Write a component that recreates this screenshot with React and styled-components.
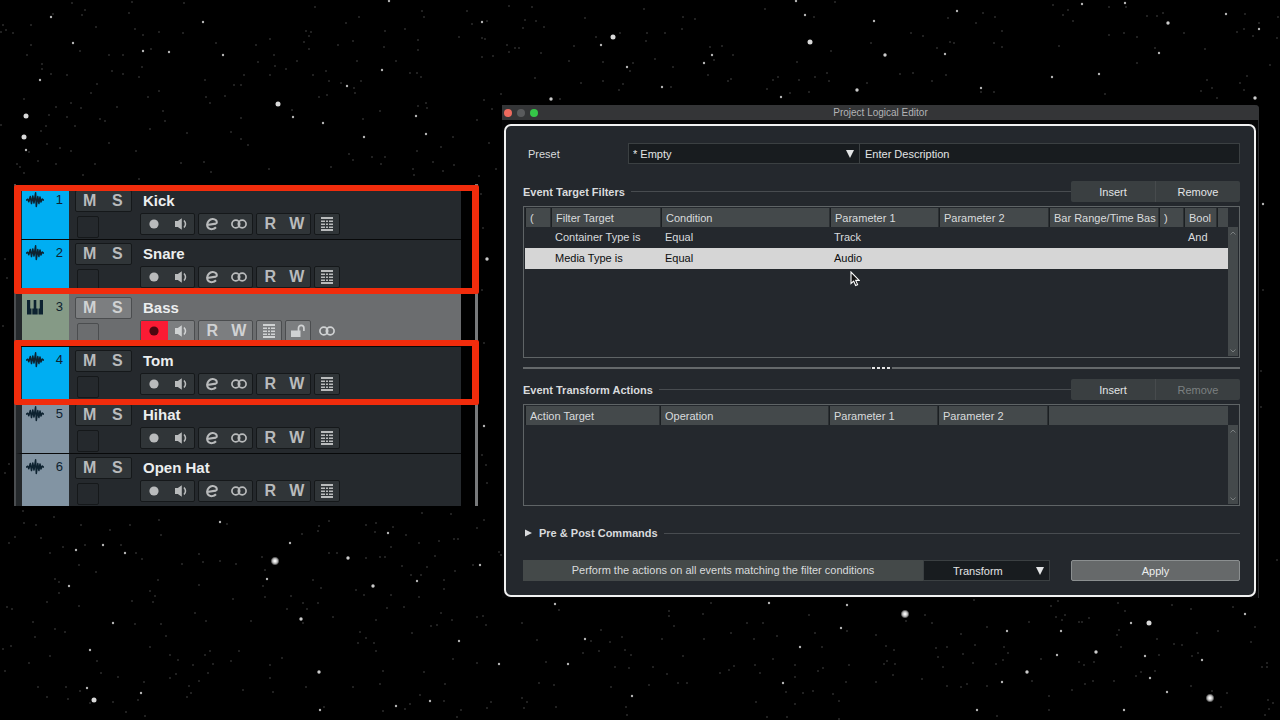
import { useState } from "react";
import styled, { createGlobalStyle, css } from "styled-components";

const GlobalStyle = createGlobalStyle`
  * {
    box-sizing: border-box;
  }

  body {
    margin: 0;
    background: #000;
  }

  button, input, select {
    margin: 0;
    padding: 0;
    border: 0;
    font: inherit;
    color: inherit;
    background: none;
  }
`;

/* star positions, grouped from faint to bright */
const STARS = [
  {
    r: 0.7,
    opacity: 0.36,
    points:
      "53,14 72,3 85,10 82,15 96,27 132,2 129,13 143,35 135,29 159,32 184,3 183,33 216,43 256,45 270,39 274,55 258,62 275,66 286,69 270,75 297,61 304,42 309,36 311,32 306,31 309,49 315,7 359,17 346,23 353,41 338,45 385,31 384,47 405,29 422,11 424,17 418,40 418,50 396,61 357,61 326,71 313,75 361,81 354,88 355,93 341,83 329,81 327,95 319,97 410,73 417,73 421,77 467,11 472,24 487,21 459,37 482,38 485,39 482,57 493,56 507,45 509,52 515,48 519,48 509,6 532,7 525,20 536,21 523,28 544,27 541,53 535,78 585,18 596,37 620,33 574,46 569,61 581,83 603,62 630,71 633,63 623,84 619,90 603,81 560,99 501,94 484,100 492,109 477,120 427,108 426,103 418,106 380,111 363,119 453,137 441,147 417,151 433,162 454,165 443,171 413,169 414,175 489,143 496,169 479,176 385,157 372,157 353,160 349,154 381,164 331,167 292,110 241,118 231,132 241,139 248,145 269,169 204,162 211,172 181,163 187,133 165,121 163,111 150,129 136,151 139,179 109,143 95,164 83,175 71,151 60,148 47,144 56,164 38,161 24,173 17,164 20,167 29,152 1,125 41,131 46,126 49,115 56,107 67,117 75,126 81,108 71,103 100,119 105,121 117,107 91,93 97,84 67,75 51,74 42,69 42,64 27,55 31,45 24,99 1,32 6,30 13,33 3,25 31,25 80,51 109,55 123,55 112,71 123,74 142,67 139,77 151,49 159,91 148,97 205,80 206,97 210,103 225,96 234,85 241,85 244,75 644,9 683,17 695,19 682,29 647,33 665,33 646,41 710,47 722,46 733,55 714,60 655,59 673,67 708,75 728,81 731,79 671,87 765,9 814,17 835,2 831,51 797,62 827,73 815,77 829,81 778,77 773,80 799,80 767,89 809,92 790,93 867,83 871,43 911,33 923,36 900,74 913,73 937,48 950,42 954,43 948,18 976,23 983,13 995,17 1002,31 994,43 1002,47 946,75 932,81 981,92 994,92 1053,5 1068,10 1063,15 1073,21 1109,7 1126,7 1147,16 1157,16 1163,13 1109,35 1124,33 1137,37 1059,46 1184,33 1155,48 1137,63 1105,94 1245,14 1259,23 1244,29 1237,32 1253,36 1277,38 1278,17 1205,49 1270,65 1247,76 1240,83 1207,80 1212,88 1201,91 1217,98 1244,90 24,523 36,525 54,517 23,511 81,525 110,530 130,525 159,520 161,535 15,537 9,543 41,538 50,553 63,547 85,545 121,545 136,553 142,559 79,565 96,572 55,579 59,582 59,593 47,602 7,607 12,609 79,606 33,622 135,624 132,601 153,602 155,596 150,591 158,580 161,624 166,636 150,647 55,629 65,632 35,637 11,646 3,649 50,656 29,663 97,661 101,673 118,677 5,671 38,687 66,687 90,703 80,691 47,697 68,699 113,702 126,712 145,716 138,700 144,682 170,655 178,660 176,674 170,678 189,686 191,693 187,697 199,681 208,673 193,665 213,664 210,651 205,655 231,661 239,651 243,690 206,621 195,613 251,621 199,585 182,564 199,554 203,562 220,561 236,564 227,524 262,557 302,534 318,531 319,526 329,521 329,553 337,553 265,570 263,586 265,597 233,599 291,596 287,609 303,603 307,609 318,603 321,588 313,580 303,623 333,617 356,590 364,595 391,595 387,608 404,607 376,620 412,633 360,632 366,638 358,643 374,643 376,651 270,665 270,678 282,658 273,692 306,687 324,707 353,687 383,671 380,684 405,709 410,704 383,711 420,695 444,701 445,684 424,672 453,659 477,663 486,625 483,616 477,617 452,620 437,625 431,626 441,613 411,575 421,575 427,567 402,566 419,597 444,589 444,580 455,571 435,556 419,543 439,541 454,539 458,539 477,528 484,520 451,514 422,513 376,523 366,525 375,532 393,527 406,535 391,547 385,557 380,557 366,558 473,565 499,552 501,555 559,610 522,623 537,640 546,662 591,641 601,630 599,651 610,642 622,637 625,650 631,655 615,667 629,668 583,653 539,683 554,685 556,707 527,702 524,708 522,698 491,702 487,708 461,710 457,717 611,687 626,707 627,715 711,603 669,611 669,616 703,614 674,626 747,623 763,623 662,639 704,639 731,633 754,639 777,636 809,615 822,647 815,633 847,631 906,621 925,615 932,623 876,635 886,646 894,650 887,661 884,664 895,664 893,675 876,682 922,679 683,656 653,667 667,674 649,685 678,683 687,683 720,673 729,670 734,666 755,665 760,673 773,659 795,665 795,677 786,692 803,693 813,691 818,671 823,668 849,665 846,682 833,694 839,701 795,704 756,702 767,717 787,717 839,719 936,648 938,657 947,647 943,667 961,634 975,645 963,654 973,663 947,686 961,687 967,684 987,686 974,600 987,627 1004,647 1008,653 1003,660 996,664 1032,681 1029,622 1041,659 1058,601 1051,606 1065,615 1062,620 1056,617 1079,622 1082,622 1089,618 1094,662 1084,665 1079,662 1093,681 1085,684 1072,690 1049,696 1049,710 997,716 1114,681 1121,647 1117,635 1119,630 1125,611 1118,603 1157,639 1159,655 1155,671 1141,672 1136,676 1174,644 1182,645 1172,605 1191,609 1197,633 1198,653 1192,656 1191,686 1212,691 1227,693 1221,707 1218,631 1233,607 1255,627 1251,642 1267,663 1262,667 1267,667 1268,700 1273,703 1269,709 1265,715 5,259 7,278 3,326 484,343 482,290 483,228 481,194 482,455 9,464 5,473 486,465 487,483 1261,371 1261,407 1263,290 1277,560",
  },
  {
    r: 1.2,
    opacity: 0.7,
    points:
      "51,17 203,22 223,55 389,1 382,70 347,86 482,22 601,45 627,67 416,116 364,137 426,134 323,123 293,117 26,150 40,80 73,43 143,51 169,52 712,55 704,63 662,87 796,1 805,15 781,97 874,21 945,54 957,11 981,88 1082,4 1125,3 1159,53 1099,74 1052,77 1226,14 1259,29 76,550 103,545 125,553 69,586 113,623 90,650 87,688 141,693 220,522 290,543 267,579 320,710 396,706 430,701 459,641 499,664 417,581 388,533 480,565 555,604 568,664 585,639 632,696 769,603 800,647 841,628 847,605 783,683 1007,631 1002,682 1057,655 1061,631 977,710 1124,710 1131,623 1145,656 1150,678 1167,692 1202,660 1245,614 484,426 1263,204",
  },
  {
    r: 1.7,
    opacity: 0.8,
    points:
      "551,99 857,90 885,55 1168,23 1255,98 348,558 301,619 373,586 319,672 1027,672 1096,652 487,259",
  },
  { r: 2.5, opacity: 0.85, points: "613,37 278,104 24,137 26,116 810,42 94,700 1149,623" },
  { r: 4.5, opacity: 1, glow: true, points: "275,561 905,614 1210,698" },
];

const TRACKS = [
  { id: 1, name: "Kick", kind: "audio", color: "#00aef2" },
  { id: 2, name: "Snare", kind: "audio", color: "#00aef2" },
  { id: 3, name: "Bass", kind: "midi", color: "#859a86", selected: true },
  { id: 4, name: "Tom", kind: "audio", color: "#00aef2" },
  { id: 5, name: "Hihat", kind: "audio", color: "#8294a3" },
  { id: 6, name: "Open Hat", kind: "audio", color: "#8294a3" },
];

const FILTER_COLUMNS = [
  { label: "(", width: 26 },
  { label: "Filter Target", width: 110 },
  { label: "Condition", width: 169 },
  { label: "Parameter 1", width: 109 },
  { label: "Parameter 2", width: 110 },
  { label: "Bar Range/Time Bas", width: 110 },
  { label: ")", width: 25 },
  { label: "Bool", width: 33 },
  { label: "" },
];

const FILTER_ROWS = [
  ["", "Container Type is", "Equal", "Track", "", "", "", "And", ""],
  ["", "Media Type is", "Equal", "Audio", "", "", "", "", ""],
];

const ACTION_COLUMNS = [
  { label: "Action Target", width: 135 },
  { label: "Operation", width: 169 },
  { label: "Parameter 1", width: 109 },
  { label: "Parameter 2", width: 110 },
  { label: "" },
];

const Starfield = () => (
  <Sky viewBox="0 0 1280 720" preserveAspectRatio="xMidYMid slice" aria-hidden="true">
    <defs>
      <radialGradient id="glow">
        <stop offset="0.2" stopColor="#f4f4f4" />
        <stop offset="0.6" stopColor="#a8a8a8" />
        <stop offset="1" stopColor="#000" />
      </radialGradient>
    </defs>
    {STARS.map(({ r, opacity, glow, points }) => (
      <g key={r} fill={glow ? "url(#glow)" : "#fff"} opacity={opacity}>
        {points.split(" ").map((point) => {
          const [x, y] = point.split(",");
          return <circle key={point} cx={x} cy={y} r={r} />;
        })}
      </g>
    ))}
  </Sky>
);

const WaveIcon = () => (
  <svg
    width="18"
    height="18"
    viewBox="0 0 18 18"
    fill="none"
    stroke="currentColor"
    strokeWidth="1.500"
    strokeLinejoin="round"
  >
    <path d="M0 9.500L1.800 8.200L2.800 10.800L4.300 5.500L5.500 12.500L6.800 5L8 12L9.600 1.800L10.300 15.500L11.800 5.500L12.900 12.500L14 6L15 11L16.200 8L18 9.500" />
  </svg>
);

const KeysIcon = () => (
  <svg width="18" height="18" viewBox="0 0 18 18" fill="currentColor">
    <path d="M1 2h3.200v8.500h1.300v6H1z M7.700 2h2.600v8.500h1.400v6H6.300v-6h1.400z M13.800 2H17v14.500h-4.500v-6h1.300z" />
  </svg>
);

const RecordIcon = () => (
  <svg width="16" height="16" viewBox="0 0 16 16" fill="currentColor">
    <circle cx="8" cy="8" r="4.600" />
  </svg>
);

const SpeakerIcon = () => (
  <svg width="16" height="16" viewBox="0 0 16 16">
    <path d="M2 5h2.800L8.800 2.200v11.600L4.800 11H2z" fill="currentColor" />
    <path d="M11 4.500q3 3.500 0 7" fill="none" stroke="currentColor" strokeWidth="1.500" />
  </svg>
);

const EditIcon = () => (
  <svg width="16" height="16" viewBox="0 0 16 16" fill="none" stroke="currentColor" strokeWidth="2.100">
    <path d="M3.200 9L11.800 7.600C13.200 7.200 13 5.400 12 4.300C10.200 2.500 6.800 2.700 4.900 4.700C2.500 7.200 2.600 10.500 4.600 12.200C6.700 13.800 10 13.200 12 11.200" />
  </svg>
);

const LinkIcon = () => (
  <svg width="16" height="16" viewBox="0 0 16 16" fill="none" stroke="currentColor" strokeWidth="1.700">
    <circle cx="4.800" cy="8" r="3.900" />
    <circle cx="11.200" cy="8" r="3.900" />
  </svg>
);

const LanesIcon = () => (
  <svg width="16" height="16" viewBox="0 0 16 16" fill="currentColor">
    <path d="M2 1h12v2H2z M2 13h12v2H2z" />
    <path d="M2 4.500h4V6H2z M7 4.500h2V6H7z M10 4.500h4V6h-4z M2 7.500h4V9H2z M7 7.500h2V9H7z M10 7.500h4V9h-4z M2 10.500h4V12H2z M7 10.500h2V12H7z M10 10.500h4V12h-4z" />
  </svg>
);

const UnlockIcon = () => (
  <svg width="16" height="16" viewBox="0 0 16 16">
    <path d="M1 7.500h9.500v6.500H1z" fill="currentColor" />
    <path d="M8.500 8V5a2.700 2.700 0 0 1 5.400 0v3" fill="none" stroke="currentColor" strokeWidth="1.700" />
  </svg>
);

const Chevron = ({ down }) => (
  <svg width="6" height="4" viewBox="0 0 6 4" fill="none" stroke="#7a7f80">
    <path d={down ? "M0.500 0.500L3 3L5.500 0.500" : "M0.500 3.500L3 1L5.500 3.500"} />
  </svg>
);

const Track = ({ track }) => {
  const { id, name, kind, color, selected } = track;

  return (
    <TrackRow $selected={selected}>
      <ColorStrip $color={color}>
        {kind === "midi" ? <KeysIcon /> : <WaveIcon />}
        <span>{id}</span>
      </ColorStrip>
      <TrackSide>
        <ButtonGroup>
          <TrackButton aria-label={`Mute ${name}`}>M</TrackButton>
          <TrackButton aria-label={`Solo ${name}`}>S</TrackButton>
        </ButtonGroup>
        <Slot />
      </TrackSide>
      <TrackMain>
        <TrackName>{name}</TrackName>
        <Controls>
          <ButtonGroup>
            <TrackButton $armed={selected} aria-label="Record"><RecordIcon /></TrackButton>
            <TrackButton aria-label="Monitor"><SpeakerIcon /></TrackButton>
          </ButtonGroup>
          {!selected && (
            <ButtonGroup>
              <TrackButton aria-label="Edit"><EditIcon /></TrackButton>
              <TrackButton aria-label="Stereo"><LinkIcon /></TrackButton>
            </ButtonGroup>
          )}
          <ButtonGroup>
            <TrackButton aria-label="Read">R</TrackButton>
            <TrackButton aria-label="Write">W</TrackButton>
          </ButtonGroup>
          <ButtonGroup $single>
            <TrackButton aria-label="Lanes"><LanesIcon /></TrackButton>
          </ButtonGroup>
          {selected && (
            <>
              <ButtonGroup $single>
                <TrackButton aria-label="Lock"><UnlockIcon /></TrackButton>
              </ButtonGroup>
              <ButtonGroup $single $plain>
                <TrackButton aria-label="Stereo"><LinkIcon /></TrackButton>
              </ButtonGroup>
            </>
          )}
        </Controls>
      </TrackMain>
    </TrackRow>
  );
};

const Grid = ({ label, columns, rows = [], selectedRow, onSelect, short, children }) => (
  <GridBox $short={short}>
    <Table aria-label={label}>
      <colgroup>
        {columns.map(({ width }, i) => (
          <Col key={i} $width={width} />
        ))}
      </colgroup>
      <thead>
        <tr>
          {columns.map((column, i) => (
            <Th key={i}><CellText>{column.label}</CellText></Th>
          ))}
        </tr>
      </thead>
      <tbody>
        {rows.map((row, i) => (
          <Tr key={i} $selected={i === selectedRow} onClick={() => onSelect(i)}>
            {row.map((cell, j) => (
              <Td key={j}>{cell}</Td>
            ))}
          </Tr>
        ))}
      </tbody>
    </Table>
    <Scrollbar>
      <button aria-label="Scroll up"><Chevron /></button>
      <button aria-label="Scroll down"><Chevron down /></button>
    </Scrollbar>
    {children}
  </GridBox>
);

const App = () => {
  const [selectedRow, setSelectedRow] = useState(1);
  const [description, setDescription] = useState("Enter Description");

  return (
    <>
      <GlobalStyle />
      <Page>
        <Starfield />
        <TrackPanel>
          <TrackList>
            {TRACKS.map((track) => (
              <Track key={track.id} track={track} />
            ))}
          </TrackList>
          <Highlight $top={1} $height={109} />
          <Highlight $top={156} $height={65} />
        </TrackPanel>

        <Window>
          <TitleBar>
            <Lights>
              <Light $color="#ed6a5e" />
              <Light $color="#5a5b5d" />
              <Light $color="#35c648" />
            </Lights>
            <h1>Project Logical Editor</h1>
          </TitleBar>
          <Editor>
            <PresetRow>
              <label htmlFor="preset">Preset</label>
              <SelectBox>
                <select id="preset">
                  <option>* Empty</option>
                </select>
                <Arrow />
              </SelectBox>
              <Description
                aria-label="Description"
                value={description}
                onChange={(event) => setDescription(event.target.value)}
              />
            </PresetRow>

            <SectionHead>
              <h2>Event Target Filters</h2>
              <Rule />
              <SectionButtons>
                <button>Insert</button>
                <button>Remove</button>
              </SectionButtons>
            </SectionHead>
            <Grid
              label="Event Target Filters"
              columns={FILTER_COLUMNS}
              rows={FILTER_ROWS}
              selectedRow={selectedRow}
              onSelect={setSelectedRow}
            >
              <Pointer viewBox="0 0 10 16">
                <path
                  d="M1 1v11.500l2.700-2.400 1.900 4.400 2-0.900-1.900-4.200h3.500z"
                  fill="#111"
                  stroke="#fff"
                  strokeWidth="1.100"
                />
              </Pointer>
            </Grid>

            <Splitter>
              <Rule $thick />
              <Grip />
              <Rule $thick />
            </Splitter>

            <SectionHead>
              <h2>Event Transform Actions</h2>
              <Rule />
              <SectionButtons>
                <button>Insert</button>
                <button disabled>Remove</button>
              </SectionButtons>
            </SectionHead>
            <Grid label="Event Transform Actions" columns={ACTION_COLUMNS} short />

            <Commands>
              <button aria-expanded="false">
                <svg width="7" height="8" viewBox="0 0 7 8" fill="currentColor">
                  <path d="M0 0.500L7 4L0 7.500z" />
                </svg>
                Pre &amp; Post Commands
              </button>
              <Rule />
            </Commands>

            <Footer>
              <FooterNote htmlFor="mode">
                Perform the actions on all events matching the filter conditions
              </FooterNote>
              <SelectBox $mode>
                <select id="mode">
                  <option>Transform</option>
                </select>
                <Arrow />
              </SelectBox>
              <ApplyButton>Apply</ApplyButton>
            </Footer>
          </Editor>
        </Window>
      </Page>
    </>
  );
};

const Page = styled.main`
  position: relative;
  min-height: 100vh;
  padding: 105px 21px 24px 14px;
  display: grid;
  grid-template-columns: minmax(0, 465fr) minmax(0, 757fr);
  gap: 23px;
  align-items: start;
  overflow: hidden;
  background: #000;
  color: #d9dbdd;
  font-family: "Liberation Sans", Arial, sans-serif;
  font-size: 11px;
`;

const Sky = styled.svg`
  position: absolute;
  inset: 0;
  width: 100%;
  height: 100%;
`;

/* track list */

const TrackPanel = styled.section`
  position: relative;
  margin-top: 79px;
`;

const TrackList = styled.ul`
  list-style: none;
  margin: 0 1px 0 0;
  padding: 2px 14px 0 0;
  background: #000;
  border-left: 2px solid #4a4d50;
  border-right: 3px solid #77797b;
`;

const TrackRow = styled.li`
  height: 53px;
  display: flex;
  overflow: hidden;
  border-left: 6px solid #24282b;
  border-top: 1px solid #08090a;
  background: ${(props) => (props.$selected ? "#6b6d6f" : "#25292d")};
  color: ${(props) => (props.$selected ? "#d0d2d3" : "#b9bbbc")};
  --group: ${(props) => (props.$selected ? "#7c7e80" : "#303538")};
  --edge: ${(props) => (props.$selected ? "#4b4d4f" : "#15181a")};

  &:nth-child(even) {
    height: 54px;
  }

  &:last-child {
    height: 53px;
  }
`;

const ColorStrip = styled.div`
  width: 47px;
  padding: 4px 6px 0 4px;
  display: flex;
  justify-content: space-between;
  align-items: flex-start;
  background: ${(props) => props.$color};
  color: #0d2230;

  span {
    font-size: 13px;
    line-height: 18px;
  }
`;

const TrackSide = styled.div`
  width: 57px;
  margin-left: 6px;
  padding-top: 3px;
`;

const TrackMain = styled.div`
  flex: 1;
  margin-left: 8px;
`;

const ButtonGroup = styled.div`
  width: ${(props) => (props.$single ? "26px" : "55px")};
  height: 22px;
  display: flex;
  overflow: hidden;
  border: 1px solid var(--edge);
  border-radius: 2px;
  background: var(--group);

  ${TrackSide} & {
    width: 57px;
  }

  ${(props) =>
    props.$plain &&
    css`
      border-color: transparent;
      background: none;
    `}
`;

const TrackButton = styled.button`
  flex: 1;
  display: flex;
  justify-content: center;
  align-items: center;
  font-size: 16px;
  font-weight: bold;
  line-height: 20px;

  ${(props) =>
    props.$armed &&
    css`
      background: #fb1b34;
      color: #4c0710;
    `}
`;

const Slot = styled.div`
  width: 22px;
  height: 22px;
  margin: 4px 0 0 2px;
  border: 1px solid var(--edge);
  border-radius: 2px;
`;

const TrackName = styled.div`
  height: 26px;
  padding: 5px 0 0 3px;
  color: #eceeef;
  font-size: 15px;
  font-weight: bold;
  line-height: 18px;
`;

const Controls = styled.div`
  display: flex;
  gap: 3px;
`;

const Highlight = styled.div`
  position: absolute;
  left: 0;
  right: 0;
  top: ${(props) => props.$top}px;
  height: ${(props) => props.$height}px;
  border: solid #f12c0c;
  border-width: 6px 7px;
  border-radius: 2px;
`;

/* editor window */

const Window = styled.section`
  position: relative;
  padding: 0 3px 1px 2px;
  background: #050506;
  border-top-right-radius: 4px;
  box-shadow: inset -1px 0 #2c2d2f;
`;

const TitleBar = styled.header`
  height: 15px;
  margin: 0 -3px 4px -2px;
  padding: 0 2px;
  display: grid;
  grid-template-columns: 1fr auto 1fr;
  align-items: center;
  border-top-right-radius: 4px;
  background: #343537;

  h1 {
    margin: 0;
    color: #b3b4b6;
    font-size: 10px;
    font-weight: normal;
    line-height: 14px;
  }
`;

const Lights = styled.div`
  display: flex;
  gap: 5px;
`;

const Light = styled.span`
  width: 8px;
  height: 8px;
  border-radius: 50%;
  background: ${(props) => props.$color};
`;

const Editor = styled.div`
  padding: 17px 14px 14px 17px;
  border: 2px solid #f2f2f2;
  border-radius: 7px;
  background: #24282d;

  h2 {
    margin: 0;
    font-size: 11px;
    font-weight: bold;
    line-height: 20px;
  }
`;

const PresetRow = styled.div`
  display: grid;
  grid-template-columns: 100px minmax(0, 232fr) minmax(0, 380fr);
  align-items: center;
  padding-left: 5px;
`;

const SelectBox = styled.div`
  position: relative;
  height: 21px;
  border: 1px solid #3b4042;
  background: #181c1f;

  select {
    width: 100%;
    height: 100%;
    padding-left: ${(props) => (props.$mode ? "29px" : "4px")};
    appearance: none;
    color: #e3e5e6;
  }
`;

const Arrow = styled.span`
  position: absolute;
  top: 6px;
  right: 5px;
  border: 4px solid transparent;
  border-top: 8px solid #e3e5e6;
  border-bottom: 0;
  pointer-events: none;
`;

const Description = styled.input`
  width: 100%;
  height: 21px;
  padding: 0 5px;
  border: 1px solid #3b4042;
  border-left: 0;
  background: #181c1f;
  color: #e3e5e6;
`;

const SectionHead = styled.div`
  height: 21px;
  margin: 17px 0 4px;
  display: flex;
  align-items: center;
`;

const Rule = styled.div`
  flex: 1;
  height: ${(props) => (props.$thick ? "2px" : "1px")};
  margin-left: ${(props) => (props.$thick ? "0" : "6px")};
  background: ${(props) => (props.$thick ? "#65696b" : "#484c50")};
`;

const SectionButtons = styled.div`
  width: 169px;
  height: 21px;
  display: flex;
  border-radius: 2px;
  background: #3a3f41;

  button {
    flex: 1;
    color: #e3e5e6;
  }

  button + button {
    border-left: 1px solid #474b4d;
  }

  button:disabled {
    color: #7b7f80;
  }
`;

const GridBox = styled.div`
  position: relative;
  height: ${(props) => (props.$short ? "102px" : "152px")};
  padding: 1px;
  display: flex;
  align-items: flex-start;
  border: 1px solid #5f6466;
`;

const Table = styled.table`
  flex: 1;
  width: 0;
  table-layout: fixed;
  border-spacing: 0;
`;

const Col = styled.col`
  width: ${(props) => (props.$width ? `${props.$width}px` : "auto")};
`;

const Th = styled.th`
  height: 19px;
  padding: 0 2px 0 4px;
  background: #44494b;
  border-left: 1px solid #1b1f22;
  border-right: 1px solid #2c3033;
  font-weight: normal;
  text-align: left;

  &:last-child {
    border-right: 0;
  }
`;

const CellText = styled.div`
  overflow: hidden;
  white-space: nowrap;
`;

const Tr = styled.tr`
  height: 21px;

  ${(props) =>
    props.$selected &&
    css`
      background: #d6d6d6;
      color: #0d0e0f;
    `}
`;

const Td = styled.td`
  padding: 0 0 2px 4px;
  white-space: nowrap;
`;

const Scrollbar = styled.div`
  align-self: stretch;
  width: 10px;
  margin: 19px 0 0;
  display: flex;
  flex-direction: column;
  justify-content: space-between;
  background: #44494b;

  button {
    height: 11px;
    display: flex;
    justify-content: center;
    align-items: center;
  }
`;

const Pointer = styled.svg`
  position: absolute;
  top: 64px;
  left: 326px;
  width: 10px;
  height: 16px;
`;

const Splitter = styled.div`
  margin: 9px 0 -7px;
  display: flex;
  align-items: center;
`;

const Grip = styled.div`
  width: 21px;
  height: 2px;
  background: repeating-linear-gradient(90deg, #24282d 0 1px, #e6e6e6 1px 4px, #24282d 4px 5px);
`;

const Commands = styled.div`
  margin: 17px 0;
  display: flex;
  align-items: center;

  button {
    padding-left: 2px;
    display: flex;
    align-items: center;
    gap: 7px;
    font-weight: bold;
    line-height: 20px;
  }
`;

const Footer = styled.div`
  display: grid;
  grid-template-columns: minmax(0, 400fr) minmax(0, 127fr) 190px;
  align-items: center;
`;

const FooterNote = styled.label`
  height: 21px;
  line-height: 21px;
  overflow: hidden;
  background: #444949;
  text-align: center;
  white-space: nowrap;
`;

const ApplyButton = styled.button`
  width: 169px;
  height: 21px;
  justify-self: end;
  border: 1px solid #8b8f90;
  border-radius: 2px;
  background: #66696a;
  color: #eceeef;
`;

export default App;
